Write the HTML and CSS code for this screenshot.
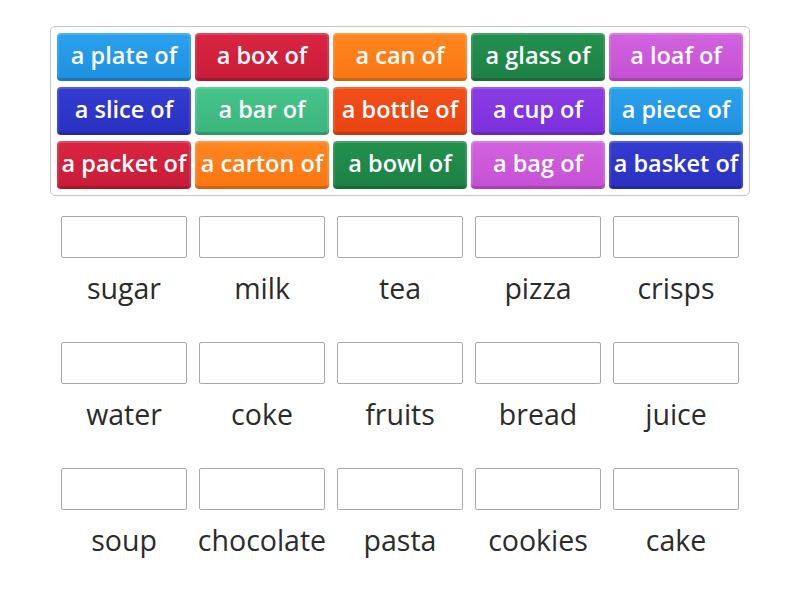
FILE: index.html
```html
<!DOCTYPE html>
<html>
<head>
<meta charset="utf-8">
<link rel="stylesheet" href="styles.css">
</head>
<body>
<div class="page">
  <div class="bank">
    <div class="tile c-blue">a plate of</div>
    <div class="tile c-red">a box of</div>
    <div class="tile c-orange">a can of</div>
    <div class="tile c-green">a glass of</div>
    <div class="tile c-orchid">a loaf of</div>
    <div class="tile c-indigo">a slice of</div>
    <div class="tile c-mint">a bar of</div>
    <div class="tile c-flame">a bottle of</div>
    <div class="tile c-purple">a cup of</div>
    <div class="tile c-blue">a piece of</div>
    <div class="tile c-red">a packet of</div>
    <div class="tile c-orange">a carton of</div>
    <div class="tile c-green">a bowl of</div>
    <div class="tile c-orchid">a bag of</div>
    <div class="tile c-indigo">a basket of</div>
  </div>
  <div class="targets">
    <div class="cell"><div class="slot"></div><div class="label">sugar</div></div>
    <div class="cell"><div class="slot"></div><div class="label">milk</div></div>
    <div class="cell"><div class="slot"></div><div class="label">tea</div></div>
    <div class="cell"><div class="slot"></div><div class="label">pizza</div></div>
    <div class="cell"><div class="slot"></div><div class="label">crisps</div></div>
    <div class="cell"><div class="slot"></div><div class="label">water</div></div>
    <div class="cell"><div class="slot"></div><div class="label">coke</div></div>
    <div class="cell"><div class="slot"></div><div class="label">fruits</div></div>
    <div class="cell"><div class="slot"></div><div class="label">bread</div></div>
    <div class="cell"><div class="slot"></div><div class="label">juice</div></div>
    <div class="cell"><div class="slot"></div><div class="label">soup</div></div>
    <div class="cell"><div class="slot"></div><div class="label">chocolate</div></div>
    <div class="cell"><div class="slot"></div><div class="label">pasta</div></div>
    <div class="cell"><div class="slot"></div><div class="label">cookies</div></div>
    <div class="cell"><div class="slot"></div><div class="label">cake</div></div>
  </div>
</div>
</body>
</html>
```

FILE: styles.css
```css
html, body {
  margin: 0;
  padding: 0;
  background: #fff;
  font-family: "Open Sans", "Liberation Sans", sans-serif;
}

.page {
  width: 800px;
  height: 600px;
  padding-top: 26px;
  box-sizing: border-box;
}

.bank {
  width: 700px;
  margin-left: 50px;
  box-sizing: border-box;
  border: 1px solid #c4c4c4;
  border-radius: 5px;
  padding: 6px;
  display: grid;
  grid-template-columns: repeat(5, 134px);
  grid-auto-rows: 48px;
  column-gap: 4px;
  row-gap: 6px;
}

.tile {
  border-radius: 4px;
  color: #fff;
  font-weight: 600;
  font-size: 23.5px;
  line-height: 30px;
  display: flex;
  align-items: center;
  justify-content: center;
  white-space: nowrap;
  box-shadow:
    inset 0 -3px 0 rgba(0, 0, 0, 0.16),
    inset 0 2px 0 rgba(255, 255, 255, 0.16),
    inset 2px 0 0 rgba(255, 255, 255, 0.1),
    inset -2px 0 0 rgba(255, 255, 255, 0.1);
  padding-bottom: 5px;
  box-sizing: border-box;
}

.c-blue { background: linear-gradient(#2ba2ee, #1e8fe0); }
.c-red { background: linear-gradient(#da2541, #c81b37); }
.c-orange { background: linear-gradient(#ff8720, #fb7511); }
.c-green { background: linear-gradient(#23914e, #1b8044); }
.c-orchid { background: linear-gradient(#d264de, #c54fd5); }
.c-indigo { background: linear-gradient(#333dd0, #2930c2); }
.c-mint { background: linear-gradient(#47c48b, #3ab57c); }
.c-flame { background: linear-gradient(#f24e1a, #e84210); }
.c-purple { background: linear-gradient(#8b3ce6, #7b2fdb); }

.targets {
  width: 690px;
  margin-left: 55px;
  margin-top: 20px;
  display: grid;
  grid-template-columns: repeat(5, 138px);
  row-gap: 35px;
}

.cell {
  display: flex;
  flex-direction: column;
  align-items: center;
}

.slot {
  width: 126px;
  height: 42px;
  box-sizing: border-box;
  border: 1px solid #a9a9a9;
  border-radius: 2px;
  background: #fff;
}

.label {
  margin-top: 11px;
  font-size: 28.5px;
  line-height: 38px;
  color: #2b2b2b;
  white-space: nowrap;
}
```
